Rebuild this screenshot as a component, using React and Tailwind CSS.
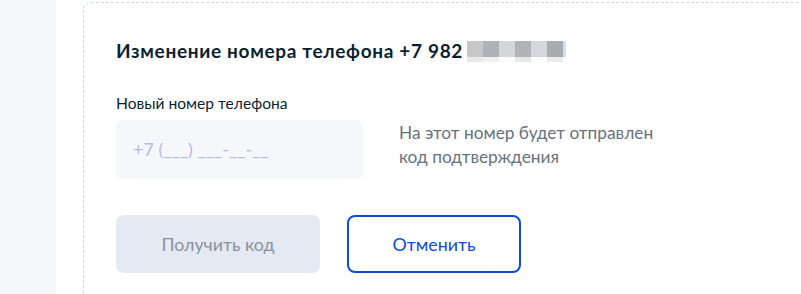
import React from "react"

const mosaicTop = ["#c5c8cb", "#aeb2b8", "#d3d7da", "#b1b4b7", "#d4d8dc", "#a9acaf"]
const mosaicBottom = ["#e8e8e9", "#f0f0f0", "#fdfbf9", "#e6e8ea", "#fefefe", "#ececec"]

// Blurred part of the phone number
const Mosaic = () => (
  <div className="flex flex-col ml-1 mt-[2px]">
    <div className="flex h-4">
      {mosaicTop.map((c, i) => (
        <div key={i} className="w-4 h-4" style={{ backgroundColor: c }} />
      ))}
      <div className="w-[3px] h-4 bg-[#cfe0ee]" />
    </div>
    <div className="flex h-[5px]">
      {mosaicBottom.map((c, i) => (
        <div key={i} className="w-4 h-[5px]" style={{ backgroundColor: c }} />
      ))}
    </div>
  </div>
)

const App = () => {
  return (
    <div className="flex w-[801px] h-[294px] overflow-hidden bg-white font-['Lato',sans-serif]">
      {/* Left gutter */}
      <div className="w-14 shrink-0 bg-[#f6f7fb]" />

      <div className="flex-1 pl-[27px] pt-[2px] min-w-0">
        <div className="h-full w-[760px] border border-dashed border-[#cbd9ef] border-r-0 border-b-0 rounded-tl-lg pl-8 pt-9">
          <div className="flex items-start h-6">
            <h2 className="text-[19px] leading-6 font-bold tracking-[0.67px] text-[#0b1f33] whitespace-nowrap">
              Изменение номера телефона +7 982
            </h2>
            <Mosaic />
          </div>

          <div className="mt-[30px] text-[15.6px] leading-5 text-[#0b1f33]">Новый номер телефона</div>

          <div className="flex items-start gap-9 mt-[7px]">
            <div className="w-[247px] h-[59px] shrink-0 rounded-md bg-[#f5f7fa] flex items-center pl-[17px] text-[18px] text-[#b4bdd6]">
              +7 (___) ___-__-__
            </div>
            <p className="text-[17.3px] leading-6 text-[#66727f] pt-px whitespace-nowrap">
              На этот номер будет отправлен
              <br />
              код подтверждения
            </p>
          </div>

          <div className="flex gap-[27px] mt-9">
            <button className="w-[204px] h-[58px] rounded-lg bg-[#e4e9f3] text-[17.8px] text-[#8a929c]">
              Получить код
            </button>
            <button className="w-[174px] h-[58px] rounded-lg border-2 border-[#0d4cd3] text-[17.8px] text-[#0d4cd3]">
              Отменить
            </button>
          </div>
        </div>
      </div>
    </div>
  )
}

export default App
